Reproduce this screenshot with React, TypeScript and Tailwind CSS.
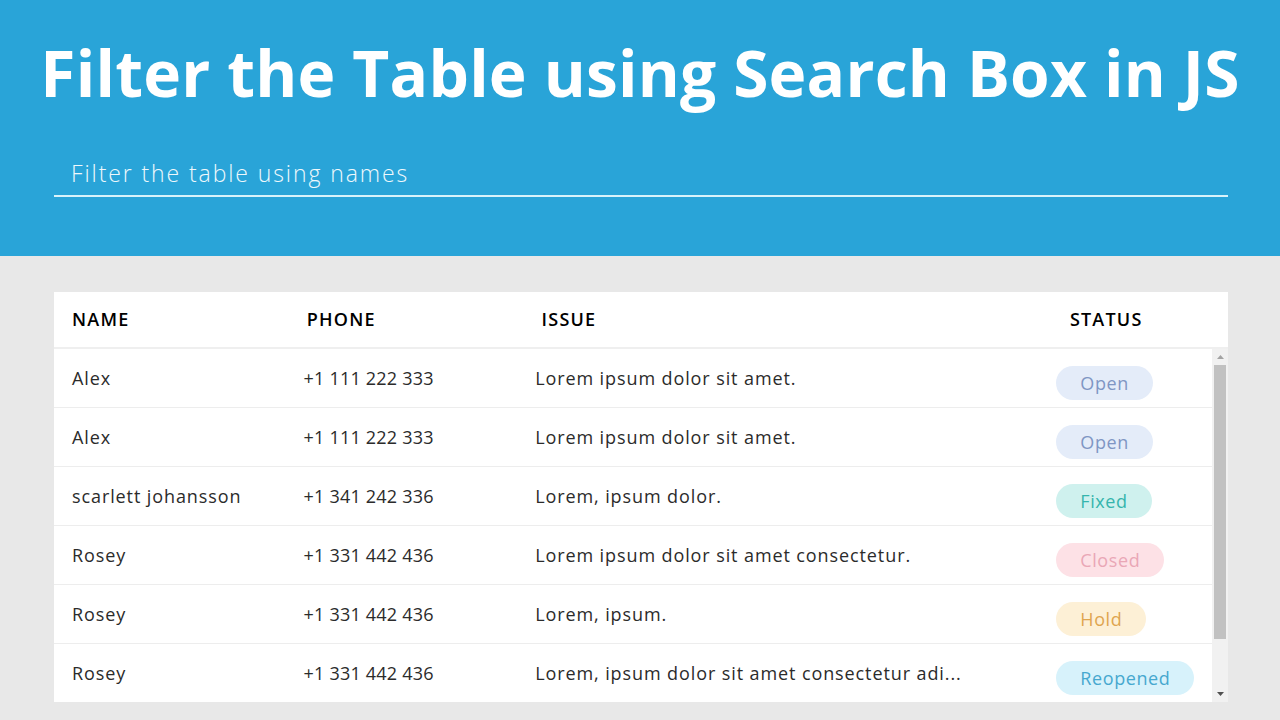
import React from "react";

type Status = "Open" | "Fixed" | "Closed" | "Hold" | "Reopened";

const rows: { name: string; phone: string; issue: string; status: Status }[] = [
  { name: "Alex", phone: "+1 111 222 333", issue: "Lorem ipsum dolor sit amet.", status: "Open" },
  { name: "Alex", phone: "+1 111 222 333", issue: "Lorem ipsum dolor sit amet.", status: "Open" },
  { name: "scarlett johansson", phone: "+1 341 242 336", issue: "Lorem, ipsum dolor.", status: "Fixed" },
  { name: "Rosey", phone: "+1 331 442 436", issue: "Lorem ipsum dolor sit amet consectetur.", status: "Closed" },
  { name: "Rosey", phone: "+1 331 442 436", issue: "Lorem, ipsum.", status: "Hold" },
  { name: "Rosey", phone: "+1 331 442 436", issue: "Lorem, ipsum dolor sit amet consectetur adi...", status: "Reopened" },
];

const pill: Record<Status, string> = {
  Open: "bg-[#e4ecf9] text-[#7f96c4]",
  Fixed: "bg-[#cff1ee] text-[#35b5ad]",
  Closed: "bg-[#fde1e6] text-[#eaa7b6]",
  Hold: "bg-[#fdf0d6] text-[#dfa54f]",
  Reopened: "bg-[#d7f2fb] text-[#46a8cf]",
};

function ScrollBar() {
  return (
    <div className="w-[16px] shrink-0 bg-[#f1f1f1] flex flex-col">
      <div className="h-[16px] flex items-center justify-center">
        <svg width="7" height="4" viewBox="0 0 7 4">
          <path d="M3.5 0 L7 4 L0 4 Z" fill="#a3a3a3" />
        </svg>
      </div>
      <div className="flex-1 px-[2px]">
        <div className="h-[274px] bg-[#c1c1c1]" />
      </div>
      <div className="h-[16px] flex items-center justify-center">
        <svg width="7" height="4" viewBox="0 0 7 4">
          <path d="M0 0 L7 0 L3.5 4 Z" fill="#505050" />
        </svg>
      </div>
    </div>
  );
}

export default function App() {
  return (
    <div className="w-[1280px] h-[720px] overflow-hidden bg-[#e8e8e8] font-['Open_Sans',sans-serif]">
      <header className="h-[256px] bg-[#29a4d8] flex flex-col">
        <h1 className="pt-[28px] text-center text-white font-bold text-[64px] leading-[90px] tracking-[0.2px]">
          Filter the Table using Search Box in JS
        </h1>
        <div className="ml-[54px] w-[1174px] mt-[41px] border-b-2 border-[#d8f3fb]">
          <input
            type="text"
            placeholder="Filter the table using names"
            className="w-full bg-transparent outline-none pl-[17px] pb-[8px] text-[23px] leading-[28px] font-light text-white placeholder:text-[#eef8fc] tracking-[1.9px]"
          />
        </div>
      </header>

      <main className="pl-[54px] pt-[36px]">
        <div className="bg-white w-[1174px] h-[410px] flex flex-col">
          <div className="flex h-[57px] items-center border-b-2 border-[#efefef] text-[18px] font-semibold text-black tracking-[1.2px]">
            <div className="w-[20%] pl-[18px]">NAME</div>
            <div className="w-[20%] pl-[18px]">PHONE</div>
            <div className="w-[45%] pl-[18px]">ISSUE</div>
            <div className="w-[15%] pl-[18px]">STATUS</div>
          </div>
          <div className="flex-1 flex min-h-0">
            <div className="flex-1 overflow-hidden">
              {rows.map((r, i) => (
                <div
                  key={i}
                  className="flex h-[59px] items-center border-b border-[#ededed] text-[18px] text-[#2b2b2b] tracking-[0.9px]"
                >
                  <div className="w-[20%] pl-[18px]">{r.name}</div>
                  <div className="w-[20%] pl-[18px] tracking-[0.2px]">{r.phone}</div>
                  <div className="w-[45%] pl-[18px]">{r.issue}</div>
                  <div className="w-[15%] pl-[18px]">
                    <span
                      className={`inline-block mt-[10px] h-[34px] leading-[34px] px-[24px] rounded-full text-[18px] tracking-[0.6px] ${pill[r.status]}`}
                    >
                      {r.status}
                    </span>
                  </div>
                </div>
              ))}
            </div>
            <ScrollBar />
          </div>
        </div>
      </main>
    </div>
  );
}
